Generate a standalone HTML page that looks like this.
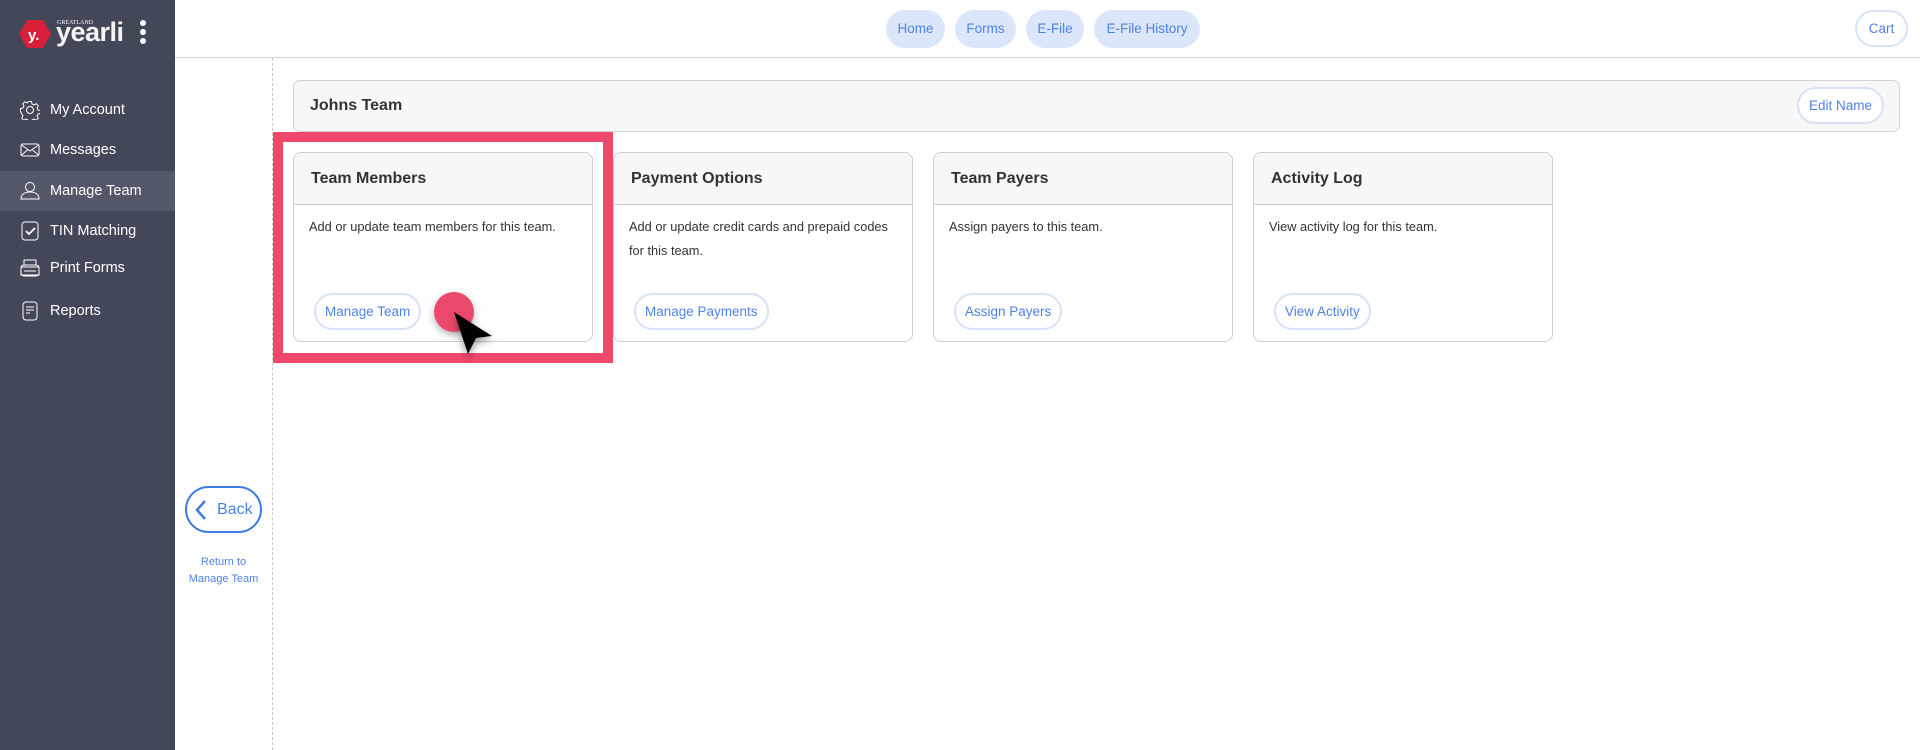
<!DOCTYPE html>
<html><head><meta charset="utf-8"><style>
*{box-sizing:border-box;margin:0;padding:0}
body{width:1920px;height:750px;overflow:hidden;background:#fff;font-family:"Liberation Sans",Arial,sans-serif;position:relative}
.side{position:absolute;left:0;top:0;width:175px;height:750px;background:#434859}
.nav{position:absolute;left:0;width:175px;height:40px;color:#fff;font-size:14.5px;line-height:40px}
.nav span{position:absolute;left:50px}
.nav svg{position:absolute;left:20px;top:10px}
.active{background:#535869}
.top{position:absolute;left:175px;top:0;right:0;height:58px;border-bottom:1px solid #d4d4d4}
.pill{position:absolute;top:10px;height:38px;border-radius:19px;background:#dbe6fa;color:#4f82e0;font-size:13.5px;line-height:38px;text-align:center}
.dash{position:absolute;left:272px;top:58px;height:692px;border-left:1px dashed #c8c8c8}
.obtn{position:absolute;border:2px solid #d6e2f6;border-radius:20px;color:#4f82e0;font-size:13.5px;text-align:center;background:#fff}
.card{position:absolute;top:152px;width:300px;height:190px;border:1px solid #cfcfcf;border-radius:8px;background:#fff;overflow:hidden}
.card h3{height:52px;background:#f7f7f7;border-bottom:1px solid #cfcfcf;font-size:16px;color:#333;line-height:52px;padding-left:17px}
.card p{font-size:12.8px;color:#333;line-height:24px;padding:10px 15px 0 15px;height:78px}
.card .obtn{position:absolute;left:20px;top:140px;height:37px;line-height:33px;padding:0 9px}
</style></head><body>
<div class="side">
 <svg style="position:absolute;left:19px;top:20px" width="32" height="28" viewBox="0 0 32 28"><polygon points="8,0 24,0 32,14 24,28 8,28 0,14" fill="#d71f3a"/><text x="9" y="20" fill="#fff" font-family="Liberation Sans" font-weight="bold" font-size="15">y.</text></svg>
 <div style="position:absolute;left:57px;top:20px;color:#fff;font-size:6px;font-family:'Liberation Serif'">GREATLAND</div>
 <div style="position:absolute;left:56px;top:17px;color:#f4f4f4;font-size:27px;font-weight:bold;letter-spacing:-0.5px">yearli</div>
 <div style="position:absolute;left:140px;top:20px;width:6px">
  <div style="width:6px;height:6px;border-radius:3px;background:#fff;margin-bottom:3px"></div><div style="width:6px;height:6px;border-radius:3px;background:#fff;margin-bottom:3px"></div><div style="width:6px;height:6px;border-radius:3px;background:#fff"></div></div>
 <div class="nav" style="top:90px"><svg width="20" height="20" viewBox="0 0 20 20" fill="none" stroke="#fff" stroke-width="1"><circle cx="10" cy="10" r="3.5"/><path d="M8.5 1.5h3l.5 2.5 2 1 2.3-1.2 2 2-1.2 2.3 1 2 2.4.4v3l-2.4.5-1 2 1.2 2.3-2 2-2.3-1.2-2 1-.5 2.4h-3l-.5-2.4-2-1-2.3 1.2-2-2 1.2-2.3-1-2L.5 11.5v-3L3 8l1-2-1.2-2.3 2-2L7 3l1-1z"/></svg><span>My Account</span></div>
 <div class="nav" style="top:130px"><svg width="20" height="20" viewBox="0 0 20 20" fill="none" stroke="#fff" stroke-width="1"><rect x="1" y="4" width="18" height="12" rx="2"/><path d="M1.5 5l8.5 6 8.5-6M1.5 15l6-5M18.5 15l-6-5"/></svg><span>Messages</span></div>
 <div class="nav active" style="top:171px"><svg width="20" height="20" viewBox="0 0 20 20" fill="none" stroke="#fff" stroke-width="1"><circle cx="10" cy="6" r="4.5"/><path d="M1 18c0-5 4-7 9-7s9 2 9 7z"/></svg><span>Manage Team</span></div>
 <div class="nav" style="top:211px"><svg width="20" height="20" viewBox="0 0 20 20" fill="none" stroke="#fff" stroke-width="1"><rect x="2" y="1" width="16" height="18" rx="3"/><path d="M6 10l3 3 6-6" stroke-width="1.8"/></svg><span>TIN Matching</span></div>
 <div class="nav" style="top:248px"><svg width="20" height="20" viewBox="0 0 20 20" fill="none" stroke="#fff" stroke-width="1"><path d="M4 7V2h12v5M1 9h18v8H1zM4 13h12"/><rect x="1" y="7" width="18" height="11" rx="3"/></svg><span>Print Forms</span></div>
 <div class="nav" style="top:291px"><svg width="20" height="20" viewBox="0 0 20 20" fill="none" stroke="#fff" stroke-width="1"><rect x="3" y="1" width="14" height="18" rx="3"/><path d="M6 6h8M6 9h8M6 12h4"/></svg><span>Reports</span></div>
</div>
<div class="top"></div>
<div class="pill" style="left:886px;width:59px">Home</div>
<div class="pill" style="left:955px;width:61px">Forms</div>
<div class="pill" style="left:1026px;width:58px">E-File</div>
<div class="pill" style="left:1094px;width:106px">E-File History</div>
<div class="obtn" style="left:1855px;top:10px;width:53px;height:37px;line-height:33px">Cart</div>
<div class="dash"></div>
<div style="position:absolute;left:293px;top:80px;width:1607px;height:52px;border:1px solid #d4d4d4;border-radius:7px;background:#f7f7f7"><div style="position:absolute;left:16px;top:0;line-height:50px;font-size:16px;font-weight:bold;color:#333">Johns Team</div></div>
<div class="obtn" style="left:1797px;top:87px;width:87px;height:37px;line-height:33px">Edit Name</div>
<div style="position:absolute;left:273px;top:132px;width:340px;height:231px;border:10px solid #f0476d"></div>
<div class="card" style="left:293px"><h3>Team Members</h3><p>Add or update team members for this team.</p><div class="obtn">Manage Team</div></div>
<div class="card" style="left:613px"><h3>Payment Options</h3><p>Add or update credit cards and prepaid codes for this team.</p><div class="obtn">Manage Payments</div></div>
<div class="card" style="left:933px"><h3>Team Payers</h3><p>Assign payers to this team.</p><div class="obtn">Assign Payers</div></div>
<div class="card" style="left:1253px"><h3>Activity Log</h3><p>View activity log for this team.</p><div class="obtn">View Activity</div></div>
<div style="position:absolute;left:434px;top:292px;width:40px;height:40px;border-radius:20px;background:#ec4a6d;box-shadow:0 3px 8px rgba(0,0,0,.3)"></div>
<svg style="position:absolute;left:452px;top:310px;filter:drop-shadow(0 4px 4px rgba(0,0,0,.4))" width="44" height="48" viewBox="0 0 44 48"><path d="M2 2L40 26 24 28 16 44z" fill="#000"/></svg>
<div style="position:absolute;left:185px;top:486px;width:77px;height:47px;border:2px solid #3f7be0;border-radius:24px;color:#4f82e0;font-size:16px;line-height:43px;padding-left:30px">Back</div>
<svg style="position:absolute;left:194px;top:499px" width="14" height="22" viewBox="0 0 14 22"><path d="M11 2L3 11l8 9" fill="none" stroke="#3f7be0" stroke-width="2.5"/></svg>
<div style="position:absolute;left:175px;top:554px;width:97px;text-align:center;color:#4f82e0;font-size:11px;line-height:17px">Return to<br>Manage Team</div>
</body></html>
